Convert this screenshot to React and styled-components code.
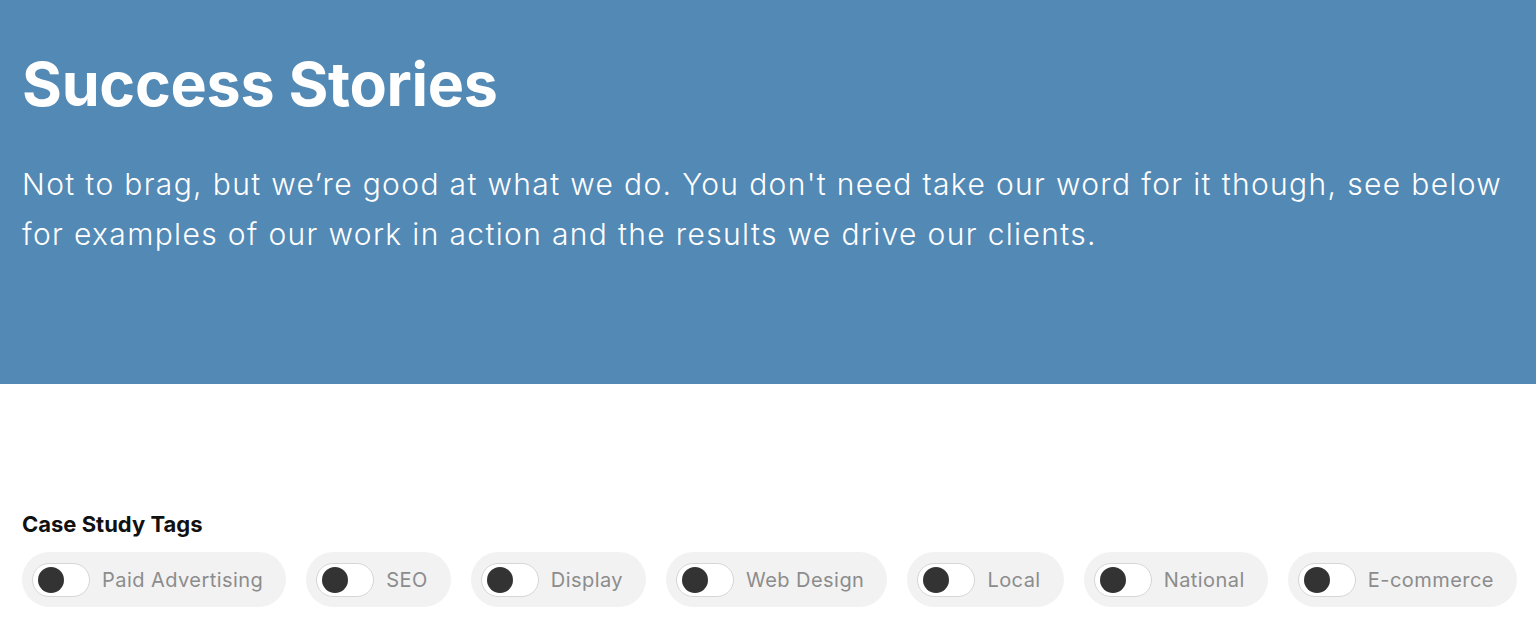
import React from "react";
import styled, { createGlobalStyle } from "styled-components";

const GlobalStyle = createGlobalStyle`
  body {
    margin: 0;
    background: #ffffff;
    font-family: Inter, "Noto Sans", sans-serif;
  }
`;

const Hero = styled.header`
  background: #5389b5;
  height: 384px;
  box-sizing: border-box;
  padding: 44px 22px 0;
  color: #ffffff;
`;

const Title = styled.h1`
  margin: 0;
  font-size: 61px;
  font-weight: 700;
  letter-spacing: -0.3px;
  line-height: 80px;
`;

const Lead = styled.p`
  margin: 35px 0 0;
  font-size: 30px;
  font-weight: 300;
  letter-spacing: 1.35px;
  line-height: 50px;
  max-width: 1492px;
`;

const Tags = styled.section`
  padding: 127px 22px 0;
`;

const TagsHeading = styled.h2`
  margin: 0 0 15px;
  font-size: 22px;
  font-weight: 700;
  color: #111111;
  line-height: 26px;
`;

const TagRow = styled.div`
  display: flex;
  gap: 20px;
`;

const Pill = styled.label`
  display: flex;
  flex-shrink: 0;
  align-items: center;
  gap: 12px;
  height: 55px;
  padding: 0 23px 0 10px;
  border-radius: 28px;
  background: #f2f2f2;
  white-space: nowrap;
  cursor: pointer;
`;

const Toggle = styled.span`
  position: relative;
  flex-shrink: 0;
  width: 56px;
  height: 32px;
  border-radius: 17px;
  background: #ffffff;
  border: 1px solid #d6d6d6;
`;

const Knob = styled.span`
  position: absolute;
  top: 3px;
  left: 5px;
  width: 26px;
  height: 26px;
  border-radius: 50%;
  background: #333333;
`;

const TagLabel = styled.span`
  font-size: 20px;
  letter-spacing: 0.45px;
  color: #8c8c8c;
`;

const tags = ["Paid Advertising", "SEO", "Display", "Web Design", "Local", "National", "E-commerce"];

export default function App() {
  return (
    <>
      <GlobalStyle />
      <Hero>
        <Title>Success Stories</Title>
        <Lead>
          Not to brag, but we’re good at what we do. You don't need take our word for it though, see below
          for examples of our work in action and the results we drive our clients.
        </Lead>
      </Hero>
      <Tags>
        <TagsHeading>Case Study Tags</TagsHeading>
        <TagRow>
          {tags.map((t) => (
            <Pill key={t}>
              <Toggle>
                <Knob />
              </Toggle>
              <TagLabel>{t}</TagLabel>
            </Pill>
          ))}
        </TagRow>
      </Tags>
    </>
  );
}
